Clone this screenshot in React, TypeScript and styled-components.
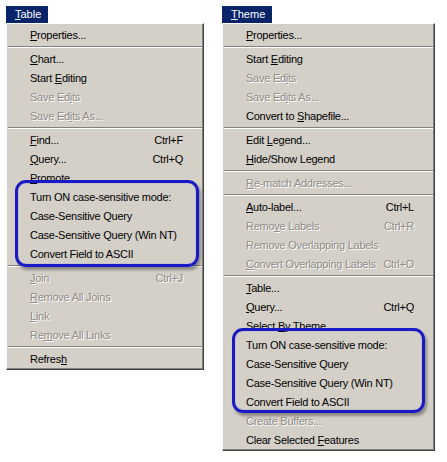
import React from 'react';
import styled, { createGlobalStyle } from 'styled-components';

const GlobalStyle = createGlobalStyle`
  html, body {
    margin: 0;
    padding: 0;
    background: #ffffff;
  }
  body {
    font-family: 'Liberation Sans', Arial, sans-serif;
    font-size: 11px;
    color: #000;
  }
`;

const Page = styled.div`
  width: 447px;
  height: 462px;
  display: flex;
  align-items: flex-start;
  gap: 18px;
  padding: 6px 0 0 6px;
  box-sizing: border-box;
`;

const MenuColumn = styled.div`
  display: flex;
  flex-direction: column;
  align-items: flex-start;
`;

const MenuTitle = styled.div`
  height: 17px;
  line-height: 17px;
  padding: 0 7px 0 9px;
  background: #0a246a;
  color: #fff;
  font-size: 11px;
`;

const Panel = styled.div<{ $width: number }>`
  width: ${(p) => p.$width}px;
  box-sizing: border-box;
  background: #d4d0c8;
  border: 1px solid;
  border-color: #ffffff #404040 #404040 #ffffff;
  box-shadow: inset -1px -1px 0 #808080;
  padding: 1px;
  display: flex;
  flex-direction: column;
`;

const Item = styled.div<{ $disabled?: boolean }>`
  height: 19px;
  display: flex;
  align-items: center;
  justify-content: space-between;
  padding: 0 19px 0 22px;
  white-space: nowrap;
  letter-spacing: -0.25px;
  color: ${(p) => (p.$disabled ? '#8f8c87' : '#000')};
  text-shadow: ${(p) => (p.$disabled ? '1px 1px 0 #ffffff' : 'none')};
`;

const Key = styled.span`
  text-decoration: underline;
  text-underline-offset: 1px;
`;

const Separator = styled.div`
  height: 5px;
  display: flex;
  align-items: center;
  &::before {
    content: '';
    flex: 1;
    height: 0;
    border-top: 1px solid #808080;
    border-bottom: 1px solid #ffffff;
  }
`;

// blue hand-drawn style frame put over a run of items
const Marked = styled.div<{ $inset: string }>`
  position: relative;
  display: flex;
  flex-direction: column;
  &::after {
    content: '';
    position: absolute;
    inset: ${(p) => p.$inset};
    border: 3px solid #1a1ac4;
    border-radius: 11px;
    box-shadow: 2px 3px 3px rgba(0, 0, 0, 0.35), inset 0 0 1px #5555ee;
    pointer-events: none;
  }
`;

type Entry =
  | { kind: 'sep' }
  | { kind: 'item'; label: string; shortcut?: string; disabled?: boolean }
  | { kind: 'group'; inset: string; items: string[] };

const Label = ({ text }: { text: string }) => {
  const i = text.indexOf('&');
  if (i < 0) return <span>{text}</span>;
  return (
    <span>
      {text.slice(0, i)}
      <Key>{text[i + 1]}</Key>
      {text.slice(i + 2)}
    </span>
  );
};

const caseItems = [
  'Turn ON case-sensitive mode:',
  'Case-Sensitive Query',
  'Case-Sensitive Query (Win NT)',
  'Convert Field to ASCII',
];

const tableMenu: Entry[] = [
  { kind: 'item', label: '&Properties...' },
  { kind: 'sep' },
  { kind: 'item', label: '&Chart...' },
  { kind: 'item', label: 'Start &Editing' },
  { kind: 'item', label: 'Save Ed&its', disabled: true },
  { kind: 'item', label: 'Save Ed&its As...', disabled: true },
  { kind: 'sep' },
  { kind: 'item', label: '&Find...', shortcut: 'Ctrl+F' },
  { kind: 'item', label: '&Query...', shortcut: 'Ctrl+Q' },
  { kind: 'item', label: '&Promote' },
  { kind: 'group', inset: '-7px 3px -4px 7px', items: caseItems },
  { kind: 'sep' },
  { kind: 'item', label: '&Join', shortcut: 'Ctrl+J', disabled: true },
  { kind: 'item', label: '&Remove All Joins', disabled: true },
  { kind: 'item', label: '&Link', disabled: true },
  { kind: 'item', label: 'Re&move All Links', disabled: true },
  { kind: 'sep' },
  { kind: 'item', label: 'Refres&h' },
];

const themeMenu: Entry[] = [
  { kind: 'item', label: '&Properties...' },
  { kind: 'sep' },
  { kind: 'item', label: 'Start &Editing' },
  { kind: 'item', label: 'Save Ed&its', disabled: true },
  { kind: 'item', label: 'Save Ed&its As...', disabled: true },
  { kind: 'item', label: 'Convert to &Shapefile...' },
  { kind: 'sep' },
  { kind: 'item', label: 'Edit &Legend...' },
  { kind: 'item', label: '&Hide/Show Legend' },
  { kind: 'sep' },
  { kind: 'item', label: '&Re-match Addresses...', disabled: true },
  { kind: 'sep' },
  { kind: 'item', label: '&Auto-label...', shortcut: 'Ctrl+L' },
  { kind: 'item', label: 'Remo&ve Labels', shortcut: 'Ctrl+R', disabled: true },
  { kind: 'item', label: 'Remove Overlappin&g Labels', disabled: true },
  { kind: 'item', label: '&Convert Overlapping Labels', shortcut: 'Ctrl+O', disabled: true },
  { kind: 'sep' },
  { kind: 'item', label: '&Table...' },
  { kind: 'item', label: '&Query...', shortcut: 'Ctrl+Q' },
  { kind: 'item', label: 'Select &By Theme' },
  { kind: 'group', inset: '-7px 8px -2px 8px', items: caseItems },
  { kind: 'item', label: 'Create Buffers...', disabled: true },
  { kind: 'item', label: 'Clear Selected &Features' },
];

const Menu = ({ title, width, entries }: { title: string; width: number; entries: Entry[] }) => (
  <MenuColumn>
    <MenuTitle>
      <Label text={title} />
    </MenuTitle>
    <Panel $width={width}>
      {entries.map((e, i) => {
        if (e.kind === 'sep') return <Separator key={i} />;
        if (e.kind === 'group')
          return (
            <Marked key={i} $inset={e.inset}>
              {e.items.map((t) => (
                <Item key={t}>
                  <Label text={t} />
                </Item>
              ))}
            </Marked>
          );
        return (
          <Item key={i} $disabled={e.disabled}>
            <Label text={e.label} />
            {e.shortcut && <span>{e.shortcut}</span>}
          </Item>
        );
      })}
    </Panel>
  </MenuColumn>
);

const App = () => (
  <>
    <GlobalStyle />
    <Page>
      <Menu title="&Table" width={198} entries={tableMenu} />
      <Menu title="&Theme" width={213} entries={themeMenu} />
    </Page>
  </>
);

export default App;
